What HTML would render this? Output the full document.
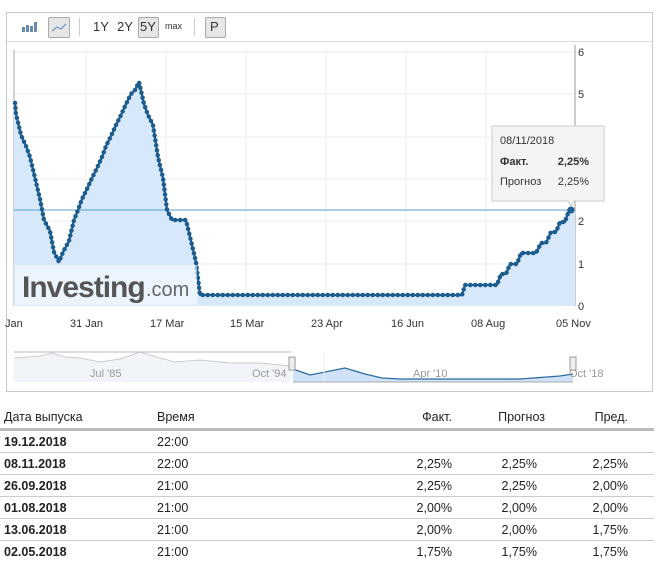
<!DOCTYPE html>
<html><head><meta charset="utf-8"><style>
body{margin:0;width:659px;height:570px;background:#fff;font-family:"Liberation Sans",Arial,sans-serif;position:relative;overflow:hidden}
.box{position:absolute;left:6px;top:12px;width:647px;height:380px;border:1px solid #c8c8c8;box-sizing:border-box}
.tb{position:absolute;left:0;top:0;width:100%;height:28px;border-bottom:1px solid #ddd;background:#fff}
.t{position:absolute;font-size:13px;color:#333}
.btn{position:absolute;border:1px solid #aaa;border-radius:2px;background:#e6e6e6}
table{position:absolute;left:0;top:406px;width:654px;border-collapse:collapse;font-size:12.5px;color:#222}
td,th{height:21px;padding:0 4px;border-bottom:1px solid #ccc;text-align:left;font-weight:normal}
th{border-bottom:3px solid #bbb;height:22px}
.r{text-align:right}
td:first-child{font-weight:bold}
</style></head><body>
<div class="box">
<div class="tb">
<svg style="position:absolute;left:14px;top:8px" width="18" height="12"><rect x="1" y="6" width="3" height="5" fill="#6a8ab0"/><rect x="5" y="4" width="3" height="7" fill="#6a8ab0"/><rect x="9" y="5" width="3" height="6" fill="#6a8ab0"/><rect x="13" y="1" width="3" height="10" fill="#6a8ab0"/></svg>
<div class="btn" style="left:41px;top:4px;width:20px;height:19px"><svg width="20" height="19"><path d="M3 13 L8 9 L12 11 L17 6" stroke="#7a9ac0" fill="none" stroke-width="1.3"/></svg></div>
<div style="position:absolute;left:72px;top:5px;width:1px;height:18px;background:#ccc"></div>
<div class="t" style="left:86px;top:6px">1Y</div>
<div class="t" style="left:110px;top:6px">2Y</div>
<div class="btn" style="left:131px;top:4px;width:19px;height:19px"></div><div class="t" style="left:133px;top:6px">5Y</div>
<div class="t" style="left:158px;top:8px;font-size:9px">max</div>
<div style="position:absolute;left:187px;top:5px;width:1px;height:18px;background:#ccc"></div>
<div class="btn" style="left:198px;top:4px;width:19px;height:19px"></div><div class="t" style="left:203px;top:6px">P</div>
</div>
</div>
<svg style="position:absolute;left:0;top:0" width="659" height="400">
<g stroke="#ececec" stroke-width="1">
<line x1="14" y1="52" x2="575" y2="52"/><line x1="14" y1="94" x2="575" y2="94"/><line x1="14" y1="137" x2="575" y2="137"/><line x1="14" y1="179" x2="575" y2="179"/><line x1="14" y1="221" x2="575" y2="221"/><line x1="14" y1="264" x2="575" y2="264"/>
<line x1="86" y1="50" x2="86" y2="306"/><line x1="166" y1="50" x2="166" y2="306"/><line x1="246" y1="50" x2="246" y2="306"/><line x1="326" y1="50" x2="326" y2="306"/><line x1="406" y1="50" x2="406" y2="306"/><line x1="486" y1="50" x2="486" y2="306"/>
</g>
<line x1="14" y1="50" x2="14" y2="306" stroke="#aaa"/>
<line x1="575" y1="45" x2="575" y2="306" stroke="#999"/>
<polygon fill="#d6e8fa" points="14,103 15,103 16,114 21,135 26,146 30,157 35,178 40,199 44,220 50,231 54,252 59,262 63,252 69,241 74,220 78,210 82,199 87,189 92,178 97,168 102,157 106,146 111,136 116,125 121,115 126,104 131,94 135,90 139,82 144,104 148,115 153,125 158,157 163,178 167,210 172,220 186,220 191,241 196,262 200,295 462,295 465,285 497,285 501,274 506,274 510,264 517,264 521,253 536,253 541,243 546,243 551,232 556,232 560,222 565,222 569,210 575,210 575,306 14,306"/>
<line x1="14" y1="210" x2="575" y2="210" stroke="#5b9fcf" stroke-width="1"/>
<polyline fill="none" stroke="#1d5c8e" stroke-width="2.2" stroke-linejoin="round" stroke-dasharray="none" points="15,103 16,114 21,135 26,146 30,157 35,178 40,199 44,220 50,231 54,252 59,262 63,252 69,241 74,220 78,210 82,199 87,189 92,178 97,168 102,157 106,146 111,136 116,125 121,115 126,104 131,94 135,90 139,82 144,104 148,115 153,125 158,157 163,178 167,210 172,220 186,220 191,241 196,262 200,295 462,295 465,285 497,285 501,274 506,274 510,264 517,264 521,253 536,253 541,243 546,243 551,232 556,232 560,222 565,222 569,210 573,210"/>
<polyline fill="none" stroke="#1d5c8e" stroke-width="4.5" stroke-linecap="round" stroke-dasharray="0 5" points="15,103 16,114 21,135 26,146 30,157 35,178 40,199 44,220 50,231 54,252 59,262 63,252 69,241 74,220 78,210 82,199 87,189 92,178 97,168 102,157 106,146 111,136 116,125 121,115 126,104 131,94 135,90 139,82 144,104 148,115 153,125 158,157 163,178 167,210 172,220 186,220 191,241 196,262 200,295 462,295 465,285 497,285 501,274 506,274 510,264 517,264 521,253 536,253 541,243 546,243 551,232 556,232 560,222 565,222 569,210 573,210"/>
<circle cx="571" cy="210" r="3.5" fill="#1d5c8e"/>
<rect x="15" y="265" width="182" height="40" fill="#fff" opacity="0.55"/>
<text x="22" y="297" font-family="Liberation Sans,Arial" font-weight="bold" font-size="30" fill="#555" letter-spacing="-1">Investing</text>
<text x="146" y="296" font-family="Liberation Sans,Arial" font-size="20" fill="#666">.com</text>
<g font-size="11" fill="#333" font-family="Liberation Sans,Arial">
<text x="578" y="56">6</text><text x="578" y="98">5</text><text x="578" y="225">2</text><text x="578" y="268">1</text><text x="578" y="310">0</text>
<text x="5" y="327">Jan</text><text x="70" y="327">31 Jan</text><text x="150" y="327">17 Mar</text><text x="230" y="327">15 Mar</text><text x="311" y="327">23 Apr</text><text x="391" y="327">16 Jun</text><text x="471" y="327">08 Aug</text><text x="556" y="327">05 Nov</text>
</g>
<polygon points="14,358 40,356 52,353 65,357 80,358 100,362 120,359 140,352 160,358 175,362 200,360 230,363 260,363 291,366 291,382 14,382" fill="#f1f4f8"/>
<polyline points="14,358 40,356 52,353 65,357 80,358 100,362 120,359 140,352 160,358 175,362 200,360 230,363 260,363 291,366" fill="none" stroke="#ccc"/>
<polyline points="14,352 291,352" fill="none" stroke="#bbb"/>
<polygon points="293,369 310,375 345,368 365,374 382,378 400,379 520,379 560,376 573,374 573,382 293,382" fill="#cfe2f7"/>
<polyline points="293,369 310,375 345,368 365,374 382,378 400,379 520,379 560,376 573,374" fill="none" stroke="#2e6a9e" stroke-width="1.2"/>
<line x1="293" y1="382" x2="573" y2="382" stroke="#aaa"/>
<line x1="324" y1="352" x2="324" y2="382" stroke="#eee"/>
<rect x="289" y="357" width="6" height="13" fill="#eee" stroke="#999"/>
<rect x="570" y="357" width="6" height="13" fill="#eee" stroke="#999"/>
<g font-size="11" fill="#999" font-family="Liberation Sans,Arial"><text x="90" y="377">Jul '85</text><text x="252" y="377">Oct '94</text><text x="413" y="377">Apr '10</text><text x="569" y="377">Oct '18</text></g>
<path d="M492 126 H604 V201 H574 L571 206 L568 201 H492 Z" fill="#f4f4f4" stroke="#ccc"/>
<g font-size="11" fill="#333" font-family="Liberation Sans,Arial"><text x="500" y="144">08/11/2018</text><text x="500" y="165" font-weight="bold">Факт.</text><text x="589" y="165" text-anchor="end" font-weight="bold">2,25%</text><text x="500" y="185">Прогноз</text><text x="589" y="185" text-anchor="end">2,25%</text></g>
</svg>
<table>
<tr><th style="width:145px">Дата выпуска</th><th>Время</th><th class="r" style="width:80px">Факт.</th><th class="r" style="width:85px">Прогноз</th><th class="r" style="width:75px;padding-right:26px">Пред.</th></tr>
<tr><td>19.12.2018</td><td>22:00</td><td></td><td></td><td></td></tr>
<tr><td>08.11.2018</td><td>22:00</td><td class="r">2,25%</td><td class="r" style="padding-right:12px">2,25%</td><td class="r" style="padding-right:26px">2,25%</td></tr>
<tr><td>26.09.2018</td><td>21:00</td><td class="r">2,25%</td><td class="r" style="padding-right:12px">2,25%</td><td class="r" style="padding-right:26px">2,00%</td></tr>
<tr><td>01.08.2018</td><td>21:00</td><td class="r">2,00%</td><td class="r" style="padding-right:12px">2,00%</td><td class="r" style="padding-right:26px">2,00%</td></tr>
<tr><td>13.06.2018</td><td>21:00</td><td class="r">2,00%</td><td class="r" style="padding-right:12px">2,00%</td><td class="r" style="padding-right:26px">1,75%</td></tr>
<tr><td style="border:none">02.05.2018</td><td style="border:none">21:00</td><td class="r" style="border:none">1,75%</td><td class="r" style="border:none;padding-right:12px">1,75%</td><td class="r" style="border:none;padding-right:26px">1,75%</td></tr>
</table>
</body></html>
